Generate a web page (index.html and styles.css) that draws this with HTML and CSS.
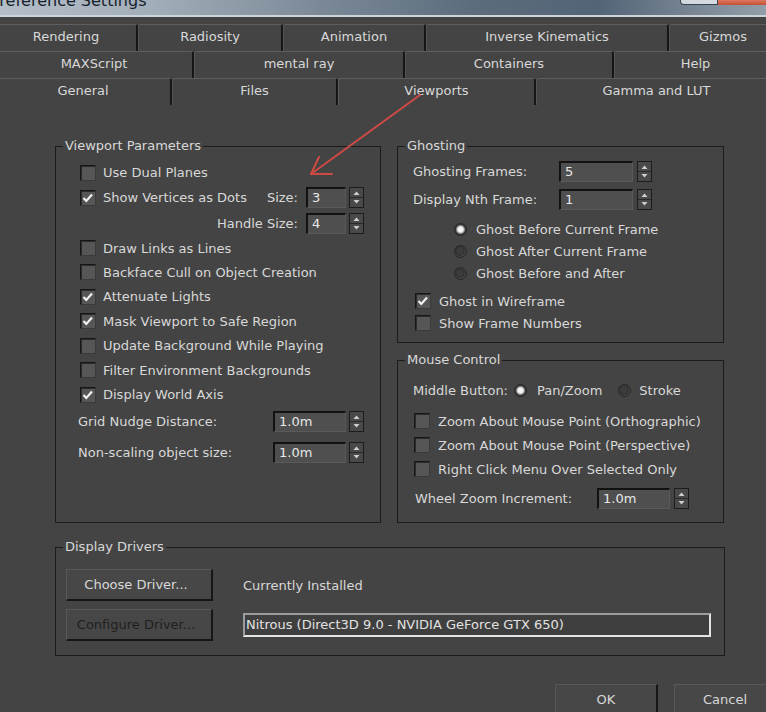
FILE: index.html
```html
<!DOCTYPE html>
<html>
<head>
<meta charset="utf-8">
<title>Preference Settings</title>
<link rel="stylesheet" href="styles.css">
</head>
<body>
<div class="titlebar">
  <span class="title">Preference Settings</span>
  <div class="caption-btns"><span class="cap-max"></span><span class="cap-close"></span></div>
</div>

<div class="tabs">
  <div class="tabrow r1">
    <div class="tab">Rendering</div>
    <div class="tab">Radiosity</div>
    <div class="tab">Animation</div>
    <div class="tab">Inverse Kinematics</div>
    <div class="tab">Gizmos</div>
  </div>
  <div class="tabrow r2">
    <div class="tab">MAXScript</div>
    <div class="tab">mental ray</div>
    <div class="tab">Containers</div>
    <div class="tab">Help</div>
  </div>
  <div class="tabrow r3">
    <div class="tab">General</div>
    <div class="tab">Files</div>
    <div class="tab active">Viewports</div>
    <div class="tab">Gamma and LUT</div>
  </div>
</div>

<div class="panel">
  <div class="columns">
    <fieldset class="group">
      <legend>Viewport Parameters</legend>
      <div class="vp-body">
        <div class="row h25"><span class="cb"></span><span>Use Dual Planes</span></div>
        <div class="row h25"><span class="cb on"><svg viewBox="0 0 14 14" width="14" height="14"><path d="M2.5 7l2.8 2.9L11 3.6" fill="none" stroke="#f2f2f2" stroke-width="2.2"/></svg></span><span>Show Vertices as Dots</span>
          <span class="spin-group push"><span class="spin-lbl">Size:</span><span class="field w40">3</span><svg class="spinner" viewBox="0 0 15 21" width="15" height="21"><rect x="0.5" y="0.5" width="14" height="20" fill="#494949" stroke="#1c1c1c"/><line x1="1" y1="10.5" x2="14" y2="10.5" stroke="#2a2a2a"/><path d="M4.5 8L7.5 4.5L10.5 8Z" fill="#d0d0d0"/><path d="M4.5 13L7.5 16.5L10.5 13Z" fill="#d0d0d0"/></svg></span>
        </div>
        <div class="row h26 end"><span class="spin-group"><span class="spin-lbl">Handle Size:</span><span class="field w40">4</span><svg class="spinner" viewBox="0 0 15 21" width="15" height="21"><rect x="0.5" y="0.5" width="14" height="20" fill="#494949" stroke="#1c1c1c"/><line x1="1" y1="10.5" x2="14" y2="10.5" stroke="#2a2a2a"/><path d="M4.5 8L7.5 4.5L10.5 8Z" fill="#d0d0d0"/><path d="M4.5 13L7.5 16.5L10.5 13Z" fill="#d0d0d0"/></svg></span></div>
        <div class="row"><span class="cb"></span><span>Draw Links as Lines</span></div>
        <div class="row"><span class="cb"></span><span>Backface Cull on Object Creation</span></div>
        <div class="row h25"><span class="cb on"><svg viewBox="0 0 14 14" width="14" height="14"><path d="M2.5 7l2.8 2.9L11 3.6" fill="none" stroke="#f2f2f2" stroke-width="2.2"/></svg></span><span>Attenuate Lights</span></div>
        <div class="row"><span class="cb on"><svg viewBox="0 0 14 14" width="14" height="14"><path d="M2.5 7l2.8 2.9L11 3.6" fill="none" stroke="#f2f2f2" stroke-width="2.2"/></svg></span><span>Mask Viewport to Safe Region</span></div>
        <div class="row h25"><span class="cb"></span><span>Update Background While Playing</span></div>
        <div class="row"><span class="cb"></span><span>Filter Environment Backgrounds</span></div>
        <div class="row h25"><span class="cb on"><svg viewBox="0 0 14 14" width="14" height="14"><path d="M2.5 7l2.8 2.9L11 3.6" fill="none" stroke="#f2f2f2" stroke-width="2.2"/></svg></span><span>Display World Axis</span></div>
        <div class="row h29 out2"><span>Grid Nudge Distance:</span>
          <span class="spin-group push"><span class="field w73">1.0m</span><svg class="spinner" viewBox="0 0 15 21" width="15" height="21"><rect x="0.5" y="0.5" width="14" height="20" fill="#494949" stroke="#1c1c1c"/><line x1="1" y1="10.5" x2="14" y2="10.5" stroke="#2a2a2a"/><path d="M4.5 8L7.5 4.5L10.5 8Z" fill="#d0d0d0"/><path d="M4.5 13L7.5 16.5L10.5 13Z" fill="#d0d0d0"/></svg></span>
        </div>
        <div class="row h32 out2"><span>Non-scaling object size:</span>
          <span class="spin-group push"><span class="field w73">1.0m</span><svg class="spinner" viewBox="0 0 15 21" width="15" height="21"><rect x="0.5" y="0.5" width="14" height="20" fill="#494949" stroke="#1c1c1c"/><line x1="1" y1="10.5" x2="14" y2="10.5" stroke="#2a2a2a"/><path d="M4.5 8L7.5 4.5L10.5 8Z" fill="#d0d0d0"/><path d="M4.5 13L7.5 16.5L10.5 13Z" fill="#d0d0d0"/></svg></span>
        </div>
      </div>
    </fieldset>

    <div class="right-col">
      <fieldset class="group ghosting">
        <legend>Ghosting</legend>
        <div class="gh-body">
          <div class="row h28"><span class="lbl-fixed w146">Ghosting Frames:</span><span class="field w74">5</span><svg class="spinner gap4" viewBox="0 0 15 21" width="15" height="21"><rect x="0.5" y="0.5" width="14" height="20" fill="#494949" stroke="#1c1c1c"/><line x1="1" y1="10.5" x2="14" y2="10.5" stroke="#2a2a2a"/><path d="M4.5 8L7.5 4.5L10.5 8Z" fill="#d0d0d0"/><path d="M4.5 13L7.5 16.5L10.5 13Z" fill="#d0d0d0"/></svg></div>
          <div class="row h29"><span class="lbl-fixed w146">Display Nth Frame:</span><span class="field w74">1</span><svg class="spinner gap4" viewBox="0 0 15 21" width="15" height="21"><rect x="0.5" y="0.5" width="14" height="20" fill="#494949" stroke="#1c1c1c"/><line x1="1" y1="10.5" x2="14" y2="10.5" stroke="#2a2a2a"/><path d="M4.5 8L7.5 4.5L10.5 8Z" fill="#d0d0d0"/><path d="M4.5 13L7.5 16.5L10.5 13Z" fill="#d0d0d0"/></svg></div>
          <div class="radios">
            <div class="row h22"><span class="radio on"></span><span>Ghost Before Current Frame</span></div>
            <div class="row h22"><span class="radio"></span><span>Ghost After Current Frame</span></div>
            <div class="row h22"><span class="radio"></span><span>Ghost Before and After</span></div>
          </div>
          <div class="gh-checks">
            <div class="row h22"><span class="cb on gap8"><svg viewBox="0 0 14 14" width="14" height="14"><path d="M2.5 7l2.8 2.9L11 3.6" fill="none" stroke="#f2f2f2" stroke-width="2.2"/></svg></span><span>Ghost in Wireframe</span></div>
            <div class="row h22"><span class="cb gap8"></span><span>Show Frame Numbers</span></div>
          </div>
        </div>
      </fieldset>

      <fieldset class="group mouse">
        <legend>Mouse Control</legend>
        <div class="mc-body">
          <div class="row"><span>Middle Button:</span><span class="radio on mb1"></span><span>Pan/Zoom</span><span class="radio mb2"></span><span>Stroke</span></div>
          <div class="mc-checks">
            <div class="row"><span class="cb gap8"></span><span>Zoom About Mouse Point (Orthographic)</span></div>
            <div class="row"><span class="cb gap8"></span><span>Zoom About Mouse Point (Perspective)</span></div>
            <div class="row"><span class="cb gap8"></span><span>Right Click Menu Over Selected Only</span></div>
          </div>
          <div class="row h25 wheel"><span class="lbl-fixed w182">Wheel Zoom Increment:</span><span class="field w73">1.0m</span><svg class="spinner gap4" viewBox="0 0 15 21" width="15" height="21"><rect x="0.5" y="0.5" width="14" height="20" fill="#494949" stroke="#1c1c1c"/><line x1="1" y1="10.5" x2="14" y2="10.5" stroke="#2a2a2a"/><path d="M4.5 8L7.5 4.5L10.5 8Z" fill="#d0d0d0"/><path d="M4.5 13L7.5 16.5L10.5 13Z" fill="#d0d0d0"/></svg></div>
        </div>
      </fieldset>
    </div>
  </div>

  <fieldset class="group drivers">
    <legend>Display Drivers</legend>
    <div class="dd-body">
      <div class="btn">Choose Driver...</div>
      <div class="dd-text">Currently Installed</div>
      <div class="btn dim">Configure Driver...</div>
      <div class="nitrous">Nitrous (Direct3D 9.0 - NVIDIA GeForce GTX 650)</div>
    </div>
  </fieldset>

  <div class="footer">
    <div class="btn fbtn">OK</div>
    <div class="btn fbtn">Cancel</div>
  </div>
</div>

<svg class="annot" width="766" height="712" viewBox="0 0 766 712">
  <g stroke="#cf4a44" stroke-width="2" fill="none" stroke-linecap="round">
    <line x1="420" y1="95" x2="311" y2="174"/>
    <line x1="311" y1="174" x2="319" y2="157"/>
    <line x1="311" y1="174" x2="332" y2="174"/>
  </g>
</svg>
</body>
</html>
```

FILE: styles.css
```css
html, body {
  margin: 0;
  padding: 0;
  overflow: hidden;
}
body {
  width: 766px;
  height: 712px;
  background: #444444;
  font-family: "DejaVu Sans", sans-serif;
  font-size: 13px;
  color: #d8d8d8;
  position: relative;
}

/* title bar */
.titlebar {
  height: 15px;
  border-bottom: 2px solid #ccd3d9;
  background: linear-gradient(90deg, #b4bec8 0%, #a1adb8 20%, #7b8997 42%, #5c6c7c 62%, #536477 78%, #7d8a97 92%, #929ea9 100%);
  display: flex;
  overflow: hidden;
}
.title {
  font-size: 16px;
  line-height: 16px;
  margin-top: -7px;
  margin-left: -10px;
  color: #17212b;
  white-space: nowrap;
}
.caption-btns {
  margin-left: auto;
  display: flex;
  align-items: flex-start;
}
.cap-max {
  width: 36px;
  height: 4px;
  border: 1px solid #37424d;
  border-top: none;
  border-radius: 0 0 0 4px;
  background: #d3d9df;
}
.cap-close {
  width: 48px;
  height: 5px;
  background: linear-gradient(#dc7860, #c64f38);
}

/* tabs */
.tabs {
  margin-top: 7px;
  margin-left: -5px;
  width: 783px;
}
.tabrow {
  display: grid;
  height: 27px;
}
.r1 { grid-template-columns: 143px 145px 143px 243px 109px; }
.r2 { grid-template-columns: 199px 211px 209px 164px; }
.r3 { grid-template-columns: 177px 166px 198px 242px; }
.tab {
  box-sizing: border-box;
  border-top: 1px solid #5e5e5e;
  border-left: 1px solid #555555;
  border-right: 2px solid #161616;
  border-radius: 3px 3px 0 0;
  display: flex;
  align-items: center;
  justify-content: center;
  padding-bottom: 3px;
  white-space: nowrap;
}
.tab.active {
  border-left-color: #5e5e5e;
}

/* panel */
.panel {
  padding: 33px 0 0 55px;
}
.columns {
  display: grid;
  grid-template-columns: 326px 327px;
  column-gap: 16px;
  height: 385px;
}
fieldset.group {
  margin: 0;
  padding: 0;
  min-width: 0;
  box-sizing: border-box;
  border: 1px solid #1c1c1c;
}
fieldset.group legend {
  margin-left: 7px;
  padding: 0 2px;
  line-height: 16px;
}
.row {
  display: flex;
  align-items: center;
  height: 24px;
  white-space: nowrap;
}
.h22 { height: 22px; }
.h25 { height: 25px; }
.h26 { height: 26px; }
.h28 { height: 28px; }
.h29 { height: 29px; }
.h32 { height: 32px; }
.end { justify-content: flex-end; }
.push { margin-left: auto; }
.out2 { margin-left: -2px; }

.vp-body {
  display: flex;
  flex-direction: column;
  padding: 6px 16px 0 24px;
}

.cb {
  flex: none;
  width: 16px;
  height: 16px;
  box-sizing: border-box;
  border: 1px solid;
  border-color: #171717 #3a3a3a #3a3a3a #171717;
  background: #565656;
  box-shadow: inset 1px 1px 0 #2c2c2c;
  margin-right: 7px;
  display: flex;
  align-items: center;
  justify-content: center;
}
.cb svg { display: block; }
.cb.gap8 { margin-right: 8px; }

.spin-group {
  display: flex;
  align-items: center;
}
.spin-lbl { margin-right: 8px; }
.field {
  box-sizing: border-box;
  height: 21px;
  border-style: solid;
  border-width: 2px 1px 1px 2px;
  border-color: #121212 #5a5a5a #5a5a5a #121212;
  background: #4f4f4f;
  color: #e8e8e8;
  padding-left: 4px;
  line-height: 18px;
}
.w40 { width: 40px; }
.w72 { width: 72px; }
.w73 { width: 73px; }
.w74 { width: 74px; }
.spinner {
  display: block;
  flex: none;
  margin-left: 3px;
}
.spinner.gap4 { margin-left: 4px; }
.lbl-fixed { flex: none; }
.w146 { width: 146px; }
.w182 { width: 182px; }

/* right column */
.right-col {
  display: flex;
  flex-direction: column;
  gap: 9px;
}
.ghosting { height: 205px; }
.mouse { flex: 1; }
.gh-body {
  padding: 3px 0 0 15px;
}
.radios {
  margin-top: 4px;
  padding-left: 41px;
}
.radio {
  flex: none;
  width: 13px;
  height: 13px;
  box-sizing: border-box;
  border-radius: 50%;
  border: 1px solid #262626;
  background: radial-gradient(circle at 45% 45%, #3c3c3c 0 3px, #303030 4px, #4a4a4a 6px);
  margin-right: 9px;
}
.radio.on {
  background: radial-gradient(circle at 50% 50%, #f4f4f4 0 2.5px, #b0b0b0 3.5px, #3a3a3a 5px);
}
.gh-checks {
  margin-top: 6px;
  padding-left: 2px;
}
.mc-body {
  padding: 10px 0 0 15px;
}
.mb1 { margin-left: 6px; margin-right: 10px; }
.mb2 { margin-left: 16px; margin-right: 8px; }
.mc-checks {
  margin-top: 7px;
  padding-left: 1px;
}
.wheel {
  margin-top: 5px;
  padding-left: 2px;
}

/* display drivers */
fieldset.drivers {
  margin-top: 16px;
  width: 670px;
}
.dd-body {
  display: grid;
  grid-template-columns: 147px 1fr;
  grid-template-rows: 32px 32px;
  column-gap: 30px;
  row-gap: 8px;
  align-items: center;
  padding: 14px 13px 14px 10px;
}
.btn {
  box-sizing: border-box;
  height: 32px;
  border-style: solid;
  border-width: 1px 2px 2px 1px;
  border-color: #585858 #161616 #161616 #585858;
  background: #474747;
  display: flex;
  align-items: center;
  justify-content: center;
  white-space: nowrap;
}
.dd-body .btn { padding-right: 6px; }
.btn.dim { color: #1f1f1f; }
.nitrous {
  box-sizing: border-box;
  height: 24px;
  border: 2px solid;
  border-color: #9c9c9c #e4e4e4 #e4e4e4 #9c9c9c;
  background: #3f3f3f;
  color: #e2e2e2;
  padding-left: 1px;
  line-height: 20px;
  white-space: nowrap;
}

/* footer */
.footer {
  display: flex;
  gap: 16px;
  margin-top: 28px;
  padding-left: 500px;
}
.fbtn {
  flex: none;
  width: 103px;
}

.annot {
  position: absolute;
  left: 0;
  top: 0;
  pointer-events: none;
}
```
